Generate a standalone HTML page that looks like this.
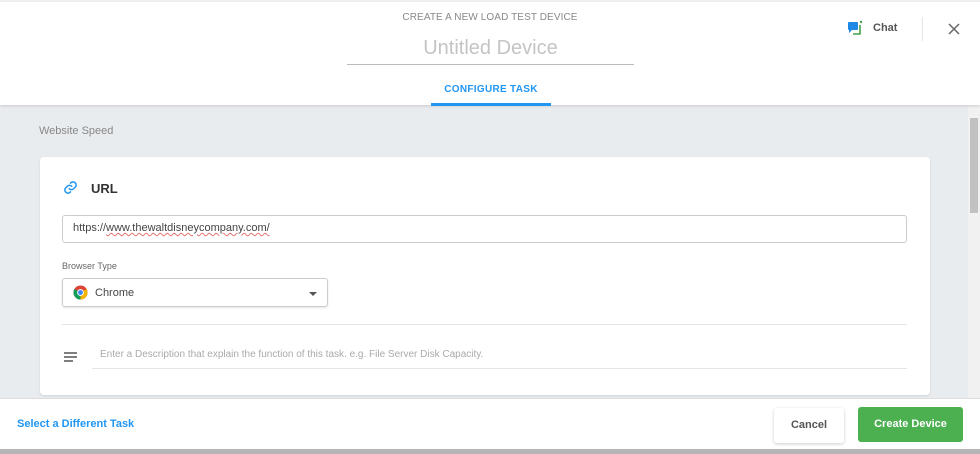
<!DOCTYPE html>
<html><head><style>
*{box-sizing:border-box;margin:0;padding:0}
body{width:980px;height:454px;overflow:hidden;font-family:"Liberation Sans",sans-serif;background:#fff;position:relative}
.top{position:absolute;left:0;top:0;width:980px;height:105px;background:#fff;border-top:2px solid #eee;box-shadow:0 1px 3px rgba(0,0,0,.15);z-index:2}
.t1{position:absolute;top:10px;width:100%;text-align:center;font-size:10px;color:#888;letter-spacing:.1px}
.t2{position:absolute;top:35px;left:347px;width:287px;text-align:center;font-size:20px;color:#c4c4c4;border-bottom:1px solid #bbb;height:28px}
.tab{position:absolute;top:82px;left:431px;width:120px;text-align:center;font-size:10px;color:#2196f3;font-weight:bold;letter-spacing:.3px}
.tabline{position:absolute;top:101px;left:431px;width:120px;height:3px;background:#2196f3}
.chat{position:absolute;left:873px;top:20px;font-size:11px;color:#555;font-weight:bold}
.sep{position:absolute;left:922px;top:15px;width:1px;height:24px;background:#e5e5e5}
.main{position:absolute;left:0;top:105px;width:968px;height:293px;background:#e9ecef}
.ws{position:absolute;left:39px;top:20px;font-size:11px;color:#888}
.card{position:absolute;left:40px;top:52px;width:890px;height:238px;background:#fff;border-radius:4px;box-shadow:0 1px 2px rgba(0,0,0,.1)}
.scroll{position:absolute;left:968px;top:105px;width:12px;height:295px;background:#f1f1f1}
.thumb{position:absolute;left:970px;top:118px;width:8px;height:95px;background:#c1c1c1}
.foot{position:absolute;left:0;top:398px;width:980px;height:51px;background:#fff;border-top:1px solid #ddd}
.strip{position:absolute;left:0;top:449px;width:980px;height:5px;background:#b5b5b5}
</style></head><body>
<div class="top">
<div class="t1">CREATE A NEW LOAD TEST DEVICE</div>
<div class="t2">Untitled Device</div>
<div class="tab">CONFIGURE TASK</div>
<div class="tabline"></div>
<svg style="position:absolute;left:847px;top:18px" width="16" height="16" viewBox="0 0 16 16"><rect x="1" y="2" width="10" height="8" rx="1" fill="#1e88e5"/><path d="M2 10v3l3-3z" fill="#1e88e5"/><path d="M13 5v9H6" stroke="#43a047" stroke-width="1.6" fill="none"/><circle cx="14" cy="2" r="1.2" fill="#43a047"/></svg>
<div class="chat">Chat</div>
<div class="sep"></div>
<svg style="position:absolute;left:948px;top:21px" width="12" height="12" viewBox="0 0 12 12"><path d="M1 1L11 11M11 1L1 11" stroke="#666" stroke-width="1.5"/></svg>
</div>
<div class="main">
<div class="ws">Website Speed</div>
<div class="card">
<svg style="position:absolute;left:23px;top:23px" width="15" height="15" viewBox="0 0 24 24"><path d="M10 14a5 5 0 0 0 7 0l3-3a5 5 0 0 0-7-7l-1 1M14 10a5 5 0 0 0-7 0l-3 3a5 5 0 0 0 7 7l1-1" stroke="#2196f3" stroke-width="2.5" fill="none" stroke-linecap="round"/></svg>
<div style="position:absolute;left:51px;top:24px;font-size:13px;color:#333;font-weight:bold">URL</div>
<div style="position:absolute;left:22px;top:58px;width:845px;height:28px;border:1px solid #ccc;border-radius:3px;font-size:11px;color:#444;padding:6px 10px">https://<span style="text-decoration:underline wavy #e57373;text-decoration-thickness:1px">www.thewaltdisneycompany.com/</span></div>
<div style="position:absolute;left:22px;top:104px;font-size:9px;color:#666">Browser Type</div>
<div style="position:absolute;left:22px;top:121px;width:266px;height:29px;border:1px solid #ccc;border-radius:3px;box-shadow:0 1px 2px rgba(0,0,0,.1)">
<svg style="position:absolute;left:10px;top:6px" width="15" height="15" viewBox="0 0 16 16"><circle cx="8" cy="8" r="7.5" fill="#db4437"/><path d="M8 8L1.5 4.3A7.5 7.5 0 0 0 8 15.5z" fill="#0f9d58"/><path d="M8 8l6.5-3.7A7.5 7.5 0 0 1 8 15.5z" fill="#f4b400"/><circle cx="8" cy="8" r="3.6" fill="#fff"/><circle cx="8" cy="8" r="2.6" fill="#4285f4"/></svg>
<div style="position:absolute;left:32px;top:8px;font-size:11px;color:#444">Chrome</div>
<div style="position:absolute;left:246px;top:13px;border:4px solid transparent;border-top:4px solid #555"></div>
</div>
<div style="position:absolute;left:22px;top:167px;width:845px;height:1px;background:#e5e5e5"></div>
<svg style="position:absolute;left:24px;top:195px" width="13" height="10"><path d="M0 1h13M0 5h13M0 9h9" stroke="#555" stroke-width="1.4"/></svg>
<div style="position:absolute;left:60px;top:192px;font-size:10px;color:#aaa">Enter a Description that explain the function of this task. e.g. File Server Disk Capacity.</div>
<div style="position:absolute;left:52px;top:211px;width:815px;height:1px;background:#e5e5e5"></div>
</div>
</div>
<div class="scroll"></div><div class="thumb"></div>
<div class="foot">
<div style="position:absolute;left:17px;top:19px;font-size:11px;color:#2196f3;font-weight:bold">Select a Different Task</div>
<div style="position:absolute;left:774px;top:9px;width:70px;height:35px;border-radius:3px;box-shadow:0 1px 3px rgba(0,0,0,.2);text-align:center;line-height:35px;font-size:11px;font-weight:bold;color:#555">Cancel</div>
<div style="position:absolute;left:858px;top:8px;width:105px;height:35px;border-radius:3px;background:#4caf50;text-align:center;line-height:35px;font-size:11px;font-weight:bold;color:#fff">Create Device</div>
</div>
<div class="strip"></div>
</body></html>
